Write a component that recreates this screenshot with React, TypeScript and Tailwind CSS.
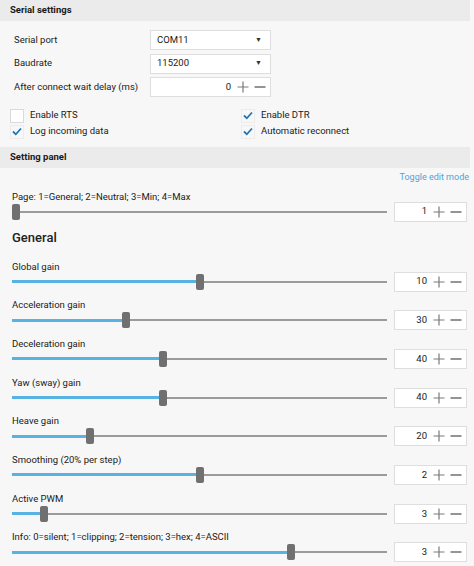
import React from 'react';

const font = { fontFamily: 'Roboto, "Noto Sans", sans-serif' };

interface SliderRow {
  label: string;
  value: number;
  frac: number;
}

const rows: SliderRow[] = [
  { label: 'Global gain', value: 10, frac: 0.5 },
  { label: 'Acceleration gain', value: 30, frac: 0.304 },
  { label: 'Deceleration gain', value: 40, frac: 0.403 },
  { label: 'Yaw (sway) gain', value: 40, frac: 0.403 },
  { label: 'Heave gain', value: 20, frac: 0.208 },
  { label: 'Smoothing (20% per step)', value: 2, frac: 0.5 },
  { label: 'Active PWM', value: 3, frac: 0.085 },
  { label: 'Info: 0=silent; 1=clipping; 2=tension; 3=hex; 4=ASCII', value: 3, frac: 0.744 },
];

function PlusMinus() {
  return (
    <div className="flex items-center gap-[5px] ml-[6px]">
      <svg width="12" height="12" viewBox="0 0 12 12">
        <path d="M6 0.5V11.5M0.5 6H11.5" stroke="#7a7a7a" strokeWidth="1.2" />
      </svg>
      <svg width="12" height="12" viewBox="0 0 12 12">
        <path d="M0.5 6H11.5" stroke="#7a7a7a" strokeWidth="1.6" />
      </svg>
    </div>
  );
}

function NumberBox({ value, className }: { value: number; className: string }) {
  return (
    <div className={`h-[20px] bg-white border border-[#dedede] flex items-center justify-end pr-[4px] text-[9.5px] text-[#1a1a1a] ${className}`}>
      <span>{value}</span>
      <PlusMinus />
    </div>
  );
}

function Slider({ frac }: { frac: number }) {
  return (
    <div className="relative flex-1 h-[20px] flex items-center">
      <div className="h-[2px] w-full bg-[#9b9b9b]" />
      <div
        className="absolute left-0 top-[8.5px] h-[3px] bg-[#59b3e2]"
        style={{ width: `${frac * 100}%` }}
      />
      <div
        className="absolute top-[2px] w-[8px] h-[16px] rounded-[2px] bg-[#707070] -translate-x-1/2"
        style={{ left: `${frac * 100}%` }}
      />
    </div>
  );
}

function Select({ value }: { value: string }) {
  return (
    <div className="w-[121px] h-[20px] bg-white border border-[#dedede] flex items-center justify-between pl-[6px] pr-[8px] text-[9.5px]">
      <span>{value}</span>
      <span className="text-[7px] text-[#333]">▼</span>
    </div>
  );
}

function Check({ checked, label }: { checked: boolean; label: string }) {
  return (
    <div className="flex items-center h-[15px]">
      <div
        className={`w-[14px] h-[14px] flex items-center justify-center ${checked ? 'border border-[#ececec]' : 'bg-white border border-[#dadada]'}`}
      >
        {checked && (
          <svg width="10" height="9" viewBox="0 0 10 9">
            <path d="M1 4.5L3.8 7.3L9 1.5" stroke="#1d76b8" strokeWidth="1.8" fill="none" />
          </svg>
        )}
      </div>
      <span className="ml-[6px] text-[9.5px]">{label}</span>
    </div>
  );
}

function Header({ title }: { title: string }) {
  return (
    <div className="h-[21px] bg-[#ebebeb] mr-[4px] flex items-center pl-[10px] text-[9.5px] font-bold text-[#1a1a1a]">
      {title}
    </div>
  );
}

export default function App() {
  return (
    <div className="w-[474px] h-[566px] overflow-hidden bg-[#f7f7f7] text-[#1a1a1a]" style={font}>
      <Header title="Serial settings" />

      <div className="pt-[9px] pl-[14px] flex flex-col gap-[3.5px]">
        <div className="flex items-center">
          <span className="w-[136px] text-[9.5px]">Serial port</span>
          <Select value="COM11" />
        </div>
        <div className="flex items-center">
          <span className="w-[136px] text-[9.5px]">Baudrate</span>
          <Select value="115200" />
        </div>
        <div className="flex items-center">
          <span className="w-[136px] text-[9.5px]">After connect wait delay (ms)</span>
          <NumberBox value={0} className="w-[121px]" />
        </div>
      </div>

      <div className="pl-[10px] pt-[11px] grid grid-cols-[231px_1fr] gap-y-[1px]">
        <Check checked={false} label="Enable RTS" />
        <Check checked={true} label="Enable DTR" />
        <Check checked={true} label="Log incoming data" />
        <Check checked={true} label="Automatic reconnect" />
      </div>

      <div className="mt-[8px]">
        <Header title="Setting panel" />
      </div>

      <div className="flex justify-end pr-[5px] h-[20px] items-center">
        <span className="text-[9px] text-[#4ea4dd]">Toggle edit mode</span>
      </div>

      <div className="pl-[12px] pr-[7px] pt-[2.5px]">
        <div className="h-[11px] leading-[11px] text-[9.5px]">Page: 1=General; 2=Neutral; 3=Min; 4=Max</div>
        <div className="flex items-center gap-[7px] h-[20px]">
          <Slider frac={0.011} />
          <NumberBox value={1} className="w-[73px]" />
        </div>

        <div className="h-[39px] pb-[6px] flex items-center text-[13px] font-medium text-[#222]">General</div>

        <div className="flex flex-col gap-[7.7px]">
          {rows.map((row) => (
            <div key={row.label}>
              <div className="h-[11px] leading-[11px] text-[9.5px]">{row.label}</div>
              <div className="flex items-center gap-[7px] h-[20px]">
                <Slider frac={row.frac} />
                <NumberBox value={row.value} className="w-[73px]" />
              </div>
            </div>
          ))}
        </div>
      </div>
    </div>
  );
}
